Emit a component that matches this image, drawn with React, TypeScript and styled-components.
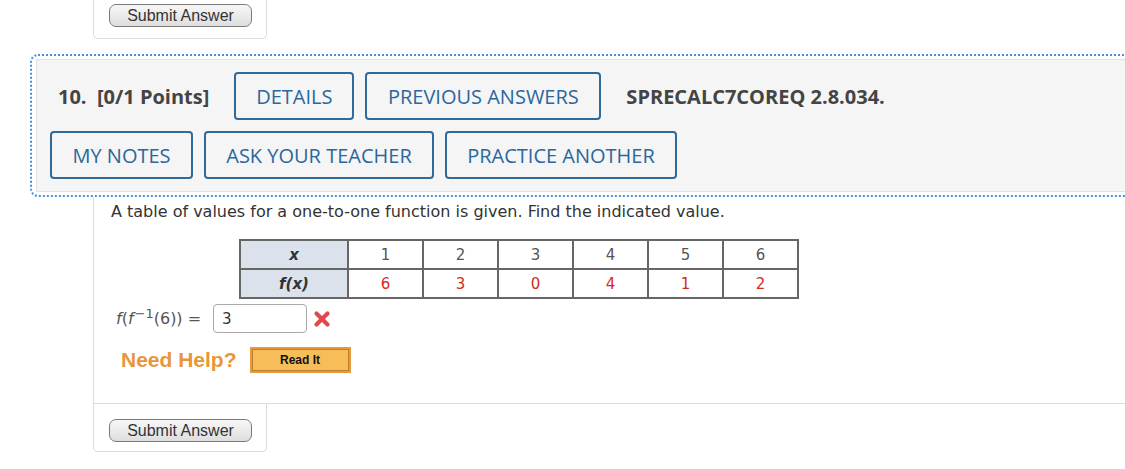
import React from "react";
import styled, { createGlobalStyle } from "styled-components";

const GlobalStyle = createGlobalStyle`
  html, body { margin: 0; padding: 0; background: #ffffff; overflow: hidden; }
  body { font-family: "DejaVu Sans", Verdana, sans-serif; }
`;

const Page = styled.div`
  width: 1125px;
  height: 469px;
  overflow: hidden;
`;

const SubmitTab = styled.div<{ $top?: boolean }>`
  margin-left: 93px;
  width: 174px;
  border: 1px solid #dcdcdc;
  border-top: none;
  border-radius: 0 0 5px 5px;
  padding: ${(p) => (p.$top ? "4px 0 11px 15px" : "15px 0 9px 15px")};
  box-sizing: border-box;
  height: ${(p) => (p.$top ? "39px" : "48px")};
`;

const SubmitButton = styled.button`
  width: 143px;
  height: 23px;
  padding: 0;
  border: 1px solid #7a7a7a;
  border-radius: 7px;
  background: linear-gradient(#f7f7f7, #dedede);
  font-family: "Liberation Sans", Arial, sans-serif;
  font-size: 16px;
  color: #333;
  line-height: 20px;
`;

const Frame = styled.div`
  margin: 15px -30px 0 30px;
  border: 2px dotted #4a8fdf;
  border-radius: 8px;
  padding: 3px 4px;
`;

const Header = styled.div`
  background: #f5f5f5;
  border: 1px solid #e2e2e2;
  padding: 12px 13px;
  display: flex;
  flex-direction: column;
  gap: 11px;
`;

const Row = styled.div<{ $indent?: number }>`
  display: flex;
  align-items: center;
  gap: 11px;
  padding-left: ${(p) => p.$indent ?? 0}px;
`;

const Label = styled.span<{ $gapLeft?: number; $gapRight?: number }>`
  font-family: "Open Sans", sans-serif;
  font-weight: 700;
  font-size: 20px;
  color: #444;
  white-space: pre;
  margin-left: ${(p) => p.$gapLeft ?? 0}px;
  margin-right: ${(p) => p.$gapRight ?? 0}px;
`;

const ActionButton = styled.button<{ $w: number }>`
  width: ${(p) => p.$w}px;
  height: 48px;
  box-sizing: border-box;
  border: 2px solid #2f6a9c;
  border-radius: 4px;
  background: transparent;
  color: #2b679c;
  font-family: "Open Sans", sans-serif;
  font-size: 20px;
  padding: 0;
  white-space: nowrap;
`;

const Body = styled.div`
  margin-left: 93px;
  border-left: 1px solid #dcdcdc;
  border-bottom: 1px solid #dcdcdc;
  padding: 5px 0 30px 17px;
  margin-right: -10px;
`;

const Prompt = styled.div`
  font-size: 16px;
  line-height: 20px;
  color: #333;
`;

const Table = styled.table`
  margin: 17px 0 0 128px;
  border-collapse: collapse;
`;

const HeadCell = styled.th`
  width: 106px;
  height: 27px;
  background: #dbe2ec;
  border: 2px solid #666;
  font-size: 15px;
  font-style: italic;
  font-weight: 700;
  color: #333;
  padding: 0;
`;

const Cell = styled.td<{ $red?: boolean }>`
  width: 73px;
  height: 27px;
  border: 2px solid #666;
  text-align: center;
  font-size: 15px;
  color: ${(p) => (p.$red ? "#d42a23" : "#555")};
  padding: 0;
`;

const EquationRow = styled.div`
  margin: 5px 0 0 5px;
  display: flex;
  align-items: center;
  font-size: 16px;
  color: #555;
`;

const Ital = styled.i`
  font-style: italic;
`;

const Sup = styled.sup`
  font-size: 13px;
  line-height: 0;
  position: relative;
  vertical-align: 0;
  top: -6px;
  margin-left: 1px;
`;

const AnswerBox = styled.div`
  margin-left: 12px;
  width: 94px;
  height: 29px;
  box-sizing: border-box;
  border: 1px solid #a9a9a9;
  border-radius: 4px;
  padding: 0 8px;
  display: flex;
  align-items: center;
  color: #333;
  font-size: 15px;
`;

const WrongMark = styled.svg`
  margin-left: 6px;
`;

const HelpRow = styled.div`
  margin: 14px 0 0 10px;
  display: flex;
  align-items: center;
  gap: 13px;
`;

const HelpTitle = styled.span`
  font-family: "Liberation Sans", Arial, sans-serif;
  font-weight: 700;
  font-size: 21px;
  color: #e8963a;
`;

const ReadIt = styled.button`
  width: 101px;
  height: 26px;
  box-sizing: border-box;
  border: 2px solid #eb973c;
  box-shadow: inset 0 0 0 1px #b98130;
  background: #f6bd58;
  font-family: "Liberation Sans", Arial, sans-serif;
  font-weight: 700;
  font-size: 12px;
  color: #111;
  padding: 0;
`;

const Footer = styled.div`
  display: flex;
`;

const xs = [1, 2, 3, 4, 5, 6];
const fx = [6, 3, 0, 4, 1, 2];

export default function App() {
  return (
    <Page>
      <GlobalStyle />
      <SubmitTab $top>
        <SubmitButton>Submit Answer</SubmitButton>
      </SubmitTab>
      <Frame>
        <Header>
          <Row $indent={8}>
            <Label $gapRight={14}>{"10.  [0/1 Points]"}</Label>
            <ActionButton $w={120}>DETAILS</ActionButton>
            <ActionButton $w={236}>PREVIOUS ANSWERS</ActionButton>
            <Label $gapLeft={14}>SPRECALC7COREQ 2.8.034.</Label>
          </Row>
          <Row>
            <ActionButton $w={143}>MY NOTES</ActionButton>
            <ActionButton $w={230}>ASK YOUR TEACHER</ActionButton>
            <ActionButton $w={232}>PRACTICE ANOTHER</ActionButton>
          </Row>
        </Header>
      </Frame>
      <Body>
        <Prompt>A table of values for a one-to-one function is given. Find the indicated value.</Prompt>
        <Table>
          <tbody>
            <tr>
              <HeadCell>x</HeadCell>
              {xs.map((v) => (
                <Cell key={v}>{v}</Cell>
              ))}
            </tr>
            <tr>
              <HeadCell>f(x)</HeadCell>
              {fx.map((v, i) => (
                <Cell key={i} $red>
                  {v}
                </Cell>
              ))}
            </tr>
          </tbody>
        </Table>
        <EquationRow>
          <span>
            <Ital>f</Ital>(<Ital>f</Ital>
            <Sup>−1</Sup>(6)) =
          </span>
          <AnswerBox>3</AnswerBox>
          <WrongMark width="18" height="18" viewBox="0 0 18 18">
            <path d="M3.5 3.5 L14.5 14.5 M14.5 3.5 L3.5 14.5" stroke="#e1474b" strokeWidth="4.2" strokeLinecap="round" />
          </WrongMark>
        </EquationRow>
        <HelpRow>
          <HelpTitle>Need Help?</HelpTitle>
          <ReadIt>Read It</ReadIt>
        </HelpRow>
      </Body>
      <Footer>
        <SubmitTab>
          <SubmitButton>Submit Answer</SubmitButton>
        </SubmitTab>
      </Footer>
    </Page>
  );
}
